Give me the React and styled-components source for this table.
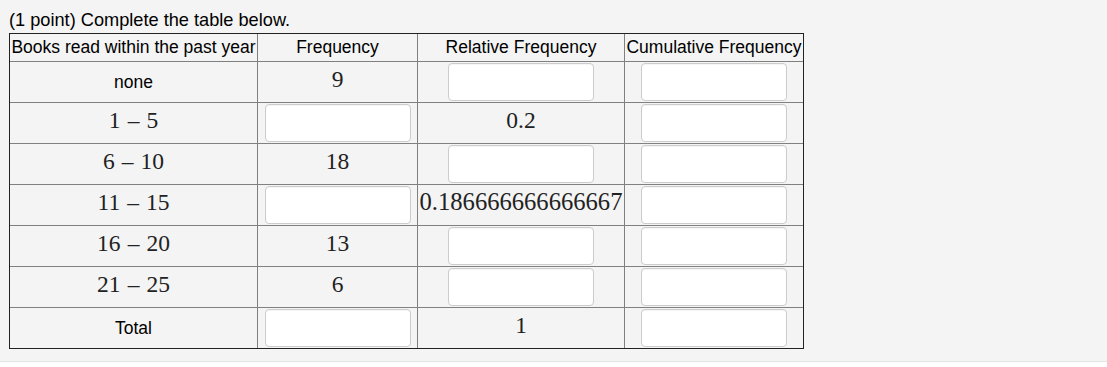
import React from 'react';
import styled, { createGlobalStyle } from 'styled-components';

const GlobalStyle = createGlobalStyle`
  body {
    margin: 0;
    background: #ffffff;
    font-family: "Liberation Sans", Arial, sans-serif;
  }
`;

const Page = styled.div`
  min-height: 351px;
  padding: 10px 0 0 9px;
  background: #f4f4f4;
  border-bottom: 1px solid #e4e4e4;
`;

const Title = styled.div`
  font-size: 18.2px;
  line-height: 20px;
  color: #000;
  margin-bottom: 3px;
`;

const Table = styled.div`
  display: inline-grid;
  grid-template-columns: 247px 159px 206px 178px;
  grid-template-rows: 27px repeat(7, 40px);
  gap: 1px;
  background: #808080;
  border: 1px solid #222;
`;

const HeadCell = styled.div`
  display: flex;
  align-items: center;
  justify-content: center;
  background: #f4f4f4;
  font-size: 17.5px;
  color: #000;
  white-space: nowrap;
`;

const Cell = styled.div`
  display: flex;
  align-items: center;
  justify-content: center;
  background: #f4f4f4;
  font-size: 17.5px;
  color: #000;
`;

const MathText = styled.span`
  font-family: "Liberation Serif", "Times New Roman", serif;
  font-size: ${(p) => (p.$wide ? '24.6px' : '23.5px')};
  line-height: 1;
  margin-bottom: 5px;
  color: #222;
  white-space: nowrap;
`;

const Op = styled.span`
  margin: 0 0.3em;
`;

const Answer = styled.input`
  box-sizing: border-box;
  width: 146px;
  height: 38px;
  margin: 0;
  padding: 4px 6px;
  border: 1px solid #cccccc;
  border-radius: 4px;
  background: #fff;
  box-shadow: inset 0 1px 1px rgba(0, 0, 0, 0.04);
  font-size: 16px;
  outline: none;
`;

const headers = [
  'Books read within the past year',
  'Frequency',
  'Relative Frequency',
  'Cumulative Frequency',
];

const rows = [
  { label: 'none', freq: '9', rel: null },
  { label: [1, 5], freq: null, rel: '0.2' },
  { label: [6, 10], freq: '18', rel: null },
  { label: [11, 15], freq: null, rel: '0.186666666666667' },
  { label: [16, 20], freq: '13', rel: null },
  { label: [21, 25], freq: '6', rel: null },
  { label: 'Total', freq: null, rel: '1' },
];

const Value = ({ value }) =>
  value === null ? (
    <Answer type="text" />
  ) : (
    <MathText $wide={value.length > 10}>{value}</MathText>
  );

const Label = ({ label }) =>
  Array.isArray(label) ? (
    <MathText>
      {label[0]}
      <Op>–</Op>
      {label[1]}
    </MathText>
  ) : (
    label
  );

const App = () => (
  <>
    <GlobalStyle />
    <Page>
      <Title>(1 point) Complete the table below.</Title>
      <Table>
        {headers.map((h) => (
          <HeadCell key={h}>{h}</HeadCell>
        ))}
        {rows.map((row, i) => (
          <React.Fragment key={i}>
            <Cell>
              <Label label={row.label} />
            </Cell>
            <Cell>
              <Value value={row.freq} />
            </Cell>
            <Cell>
              <Value value={row.rel} />
            </Cell>
            <Cell>
              <Answer type="text" />
            </Cell>
          </React.Fragment>
        ))}
      </Table>
    </Page>
  </>
);

export default App;
